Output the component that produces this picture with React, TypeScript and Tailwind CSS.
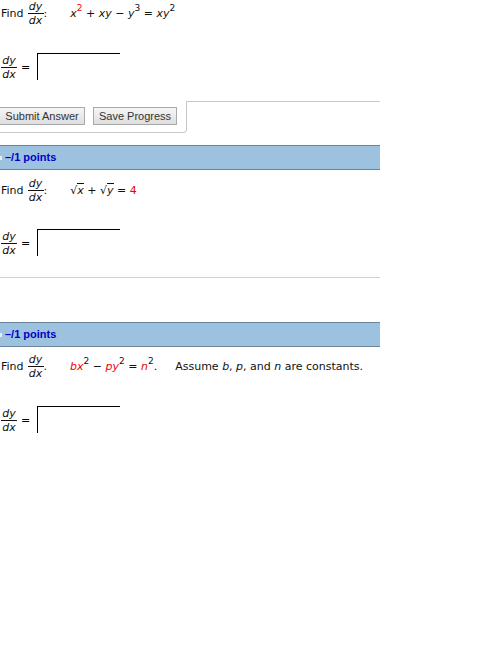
import React from 'react';

const V = { fontFamily: '"DejaVu Sans", Verdana, sans-serif' };
const A = { fontFamily: '"Liberation Sans", Arial, sans-serif' };

const Frac = () => (
  <span className="inline-flex flex-col items-center text-[11px] italic leading-[12px] text-[#111]">
    <span>dy</span>
    <span className="h-[1px] w-[16px] bg-[#111]" />
    <span className="pt-[1px]">dx</span>
  </span>
);

const AnswerRow = () => (
  <div className="flex h-[27px] items-start pl-[1px]">
    <div className="flex items-center pt-[2px]">
      <Frac />
      <span className="mb-[1px] ml-[4px] text-[11px] leading-[11px]">=</span>
    </div>
    <div className="ml-[7px] h-[27px] w-[83px] border-l border-t border-black" />
  </div>
);

const FindRow = ({ sep, children }: { sep: string; children: React.ReactNode }) => (
  <div className="flex h-[26px] items-center pl-[1px] text-[11px] leading-[12px] text-[#111]">
    <span className="mb-[1px]">Find</span>
    <span className="ml-[4px]">
      <Frac />
    </span>
    <span className="mb-[1px]">{sep}</span>
    {children}
  </div>
);

const Sup = ({ children, red }: { children: React.ReactNode; red?: boolean }) => (
  <sup className={'relative -top-[6px] text-[9px] not-italic ' + (red ? 'text-[#e00]' : 'text-[#111]')}>{children}</sup>
);

const Header = () => (
  <div className="relative flex h-[25px] w-[380px] items-center border-y border-[#6b8498] bg-[#9dc2df] pl-[5px]">
    <span className="absolute left-0 top-[10px] h-[4px] w-[2px] bg-[#e8eef4]" />
    <span className="text-[11px] font-bold text-[#0000c8]" style={A}>
      –/1 points
    </span>
  </div>
);

export default function App() {
  return (
    <div className="min-h-[653px] w-[490px] bg-white" style={V}>
      {/* problem 1 */}
      <div className="pt-[1px]">
        <FindRow sep=":">
          <span className="mb-[1px] ml-[23px] italic">
            x<Sup red>2</Sup>
            <span className="not-italic"> + </span>xy<span className="not-italic"> − </span>y<Sup>3</Sup>
            <span className="not-italic"> = </span>xy<Sup>2</Sup>
          </span>
        </FindRow>
      </div>
      <div className="mt-[26px]">
        <AnswerRow />
      </div>

      <div className="mt-[21px] flex h-[32px] w-[380px]">
        <div className="flex h-[32px] w-[187px] items-start gap-[8px] rounded-br-[4px] border-b border-r border-[#c8c8c8] pt-[6px]">
          <button
            className="-ml-[1px] h-[18px] w-[86px] border border-[#a9a9a9] bg-gradient-to-b from-[#f6f6f6] to-[#dedede] text-[11px] text-[#333]"
            style={A}
          >
            Submit Answer
          </button>
          <button
            className="h-[18px] w-[84px] border border-[#a9a9a9] bg-gradient-to-b from-[#f6f6f6] to-[#dedede] text-[11px] text-[#333]"
            style={A}
          >
            Save Progress
          </button>
        </div>
        <div className="h-[1px] flex-1 bg-[#c8c8c8]" />
      </div>

      <div className="mt-[12px]">
        <Header />
      </div>

      {/* problem 2 */}
      <div className="mt-[8px]">
        <FindRow sep=":">
          <span className="mb-[1px] ml-[23px]">
            √<span className="border-t border-[#111] italic">x</span> + √
            <span className="border-t border-[#111] italic">y</span> = <span className="text-[#e00]">4</span>
          </span>
        </FindRow>
      </div>
      <div className="mt-[25px]">
        <AnswerRow />
      </div>
      <div className="mt-[21px] h-[1px] w-[380px] bg-[#d0d0d0]" />

      <div className="mt-[44px]">
        <Header />
      </div>

      {/* problem 3 */}
      <div className="mt-[7px]">
        <FindRow sep=".">
          <span className="mb-[1px] ml-[23px]">
            <span className="italic text-[#e00]">bx</span>
            <Sup>2</Sup> − <span className="italic text-[#e00]">py</span>
            <Sup>2</Sup> = <span className="italic text-[#e00]">n</span>
            <Sup>2</Sup>.
          </span>
          <span className="mb-[1px] ml-[18px]">
            Assume <i>b</i>, <i>p</i>, and <i>n</i> are constants.
          </span>
        </FindRow>
      </div>
      <div className="mt-[26px]">
        <AnswerRow />
      </div>
    </div>
  );
}
